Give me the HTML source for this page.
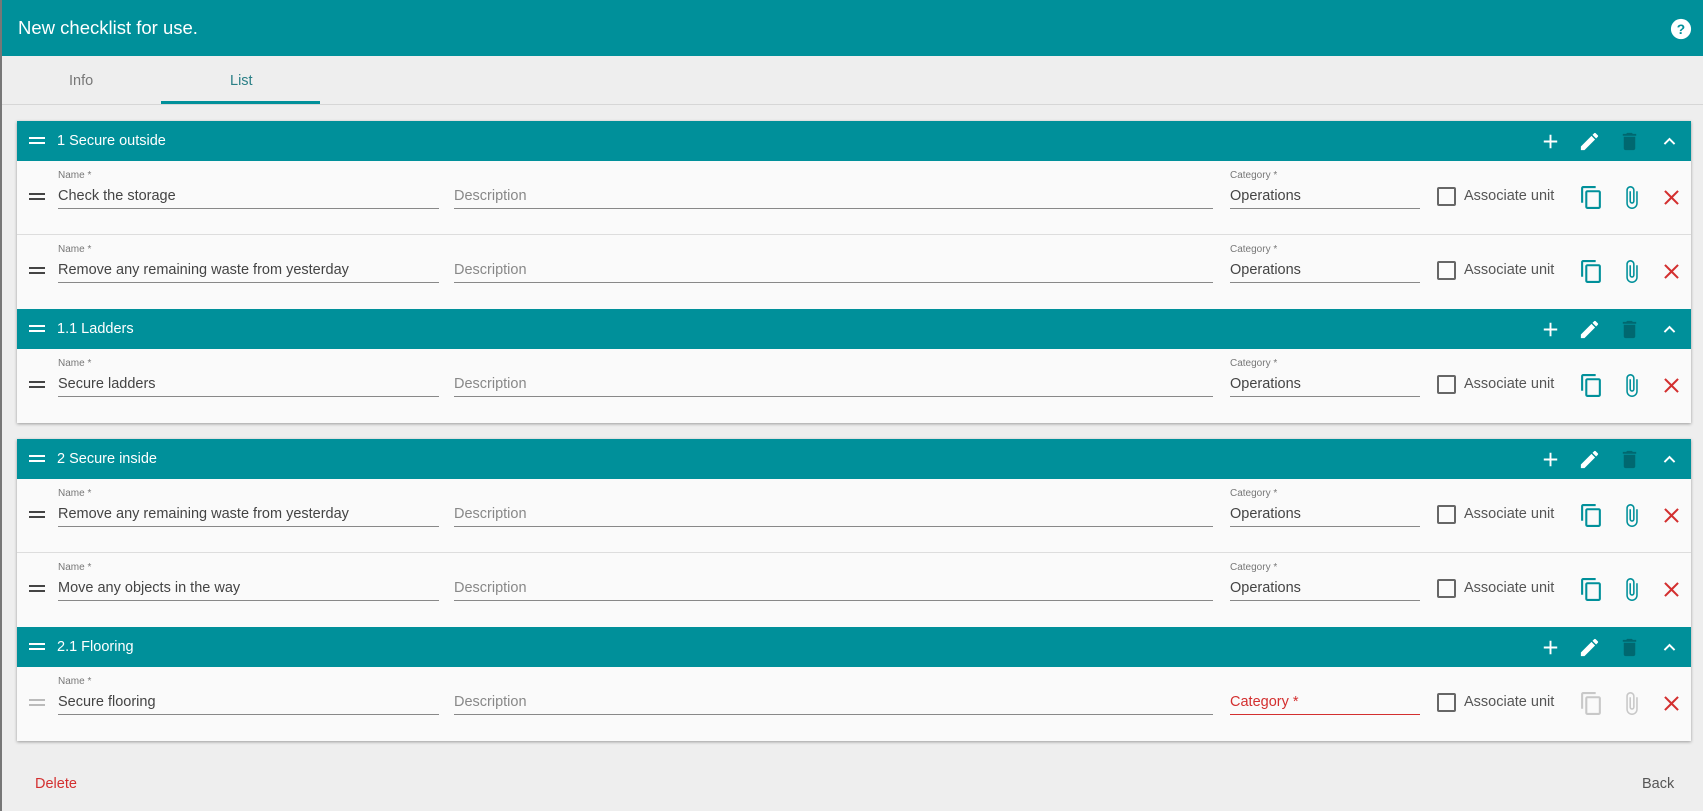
<!DOCTYPE html><html><head><style>
*{margin:0;padding:0;box-sizing:border-box}
body{width:1703px;height:811px;background:#eeeeee;font-family:"Liberation Sans",sans-serif;position:relative;overflow:hidden;border-left:2px solid #777}
.a{position:absolute}
.top{left:0;top:0;width:1703px;height:56px;background:#00909a;color:#fff;font-size:18.5px}
.card{left:15px;width:1674px;background:#fafafa;box-shadow:0 1px 3px rgba(0,0,0,.35)}
.hd{left:0;width:1674px;height:40px;background:#00909a;color:#fff;font-size:14.5px}
.row{left:0;width:1674px;height:74px;border-bottom:1px solid #ddd}
.lbl{font-size:10px;color:#777}
.val{font-size:14.5px;color:#444}
.ph{font-size:14.5px;color:#888}
.ul{height:1px;background:#888}
</style></head><body>
<div class="a top"><div class="a" style="left:16px;top:17px">New checklist for use.</div>
<svg class="a" style="left:1668px;top:18px" width="22" height="22" viewBox="0 0 24 24"><circle cx="12" cy="12" r="11" fill="#fff"/><text x="12" y="17.5" font-size="15" font-weight="bold" text-anchor="middle" fill="#00909a" font-family="Liberation Sans">?</text></svg></div>
<div class="a" style="left:67px;top:73px;font-size:14.5px;color:#777">Info</div>
<div class="a" style="left:228px;top:73px;font-size:14.5px;color:#2a7f86">List</div>
<div class="a" style="left:159px;top:101px;width:159px;height:3px;background:#00909a"></div>
<div class="a" style="left:0;top:104px;width:1703px;height:1px;background:#d6d6d6"></div>
<div id="c"></div>
<div class="a" style="left:33px;top:776px;font-size:14.5px;color:#d32f2f">Delete</div>
<div class="a" style="left:1640px;top:776px;font-size:14.5px;color:#555">Back</div>
<script>
const ic={
plus:'<path d="M19 13h-6v6h-2v-6H5v-2h6V5h2v6h6v2z" fill="#fff"/>',
pen:'<path d="M3 17.25V21h3.75L17.81 9.94l-3.75-3.75L3 17.25zM20.71 7.04a1 1 0 000-1.41l-2.34-2.34a1 1 0 00-1.41 0l-1.83 1.83 3.75 3.75 1.83-1.83z" fill="#fff"/>',
trash:'<path d="M6 19c0 1.1.9 2 2 2h8c1.1 0 2-.9 2-2V7H6v12zM19 4h-3.5l-1-1h-5l-1 1H5v2h14V4z" fill="#006870"/>',
up:'<path d="M7.41 15.41L12 10.83l4.59 4.58L18 14l-6-6-6 6z" fill="#fff"/>',
copy:c=>`<path d="M16 1H4c-1.1 0-2 .9-2 2v14h2V3h12V1zm3 4H8c-1.1 0-2 .9-2 2v14c0 1.1.9 2 2 2h11c1.1 0 2-.9 2-2V7c0-1.1-.9-2-2-2zm0 16H8V7h11v14z" fill="${c}"/>`,
clip:c=>`<path d="M16.5 6v11.5c0 2.21-1.79 4-4 4s-4-1.79-4-4V5a2.5 2.5 0 015 0v10.5c0 .55-.45 1-1 1s-1-.45-1-1V6H10v9.5a2.5 2.5 0 005 0V5c0-2.21-1.79-4-4-4S7 2.79 7 5v12.5c0 3.04 2.46 5.5 5.5 5.5s5.5-2.46 5.5-5.5V6h-1.5z" fill="${c}"/>`,
x:'<path d="M19 6.41L17.59 5 12 10.59 6.41 5 5 6.41 10.59 12 5 17.59 6.41 19 12 13.41 17.59 19 19 17.59 13.41 12z" fill="#d32f2f"/>'};
const sv=(cx,cy,s,p)=>`<svg class="a" style="left:${cx-s/2}px;top:${cy-s/2}px" width="${s}" height="${s}" viewBox="0 0 24 24">${p}</svg>`;
const bars=(x,y,c)=>`<div class="a" style="left:${x}px;top:${y}px;width:16px;height:2px;background:${c}"></div><div class="a" style="left:${x}px;top:${y+5}px;width:16px;height:2px;background:${c}"></div>`;
function hd(y,t){return `<div class="a hd" style="top:${y}px">${bars(12,16,'#fff')}<div class="a" style="left:40px;top:12px">${t}</div>${sv(1533,20,23,ic.plus)}${sv(1572,20,23,ic.pen)}${sv(1612,20,23,ic.trash)}${sv(1652,20,23,ic.up)}</div>`}
function row(y,name,last,bad){let s=`<div class="a row" style="top:${y}px;${last?'border:0':''}">${bars(12,32,bad?'#bbb':'#444')}`;
s+=`<div class="a lbl" style="left:41px;top:9px">Name *</div><div class="a val" style="left:41px;top:27px">${name}</div><div class="a ul" style="left:41px;top:47px;width:381px"></div>`;
s+=`<div class="a ph" style="left:437px;top:27px">Description</div><div class="a ul" style="left:437px;top:47px;width:759px"></div>`;
if(bad){s+=`<div class="a" style="left:1213px;top:27px;font-size:14.5px;color:#d32f2f">Category *</div><div class="a ul" style="left:1213px;top:47px;width:190px;background:#d32f2f"></div>`}
else s+=`<div class="a lbl" style="left:1213px;top:9px">Category *</div><div class="a val" style="left:1213px;top:27px">Operations</div><div class="a ul" style="left:1213px;top:47px;width:190px"></div>`;
s+=`<div class="a" style="left:1420px;top:26px;width:19px;height:19px;border:2px solid #666;border-radius:2px"></div><div class="a val" style="left:1447px;top:27px;color:#555">Associate unit</div>`;
const c=bad?'#c8c8c8':'#00909a';
s+=sv(1574,36,25,ic.copy(c))+sv(1614,36,25,ic.clip(c))+sv(1654,36,25,ic.x)+`</div>`;return s}
let h='';
h+=`<div class="a card" style="top:121px;height:302px">${hd(0,'1 Secure outside')}${row(40,'Check the storage')}${row(114,'Remove any remaining waste from yesterday',1)}${hd(188,'1.1 Ladders')}${row(228,'Secure ladders',1)}</div>`;
h+=`<div class="a card" style="top:439px;height:302px">${hd(0,'2 Secure inside')}${row(40,'Remove any remaining waste from yesterday')}${row(114,'Move any objects in the way',1)}${hd(188,'2.1 Flooring')}${row(228,'Secure flooring',1,1)}</div>`;
document.getElementById('c').outerHTML=h;
</script></body></html>
